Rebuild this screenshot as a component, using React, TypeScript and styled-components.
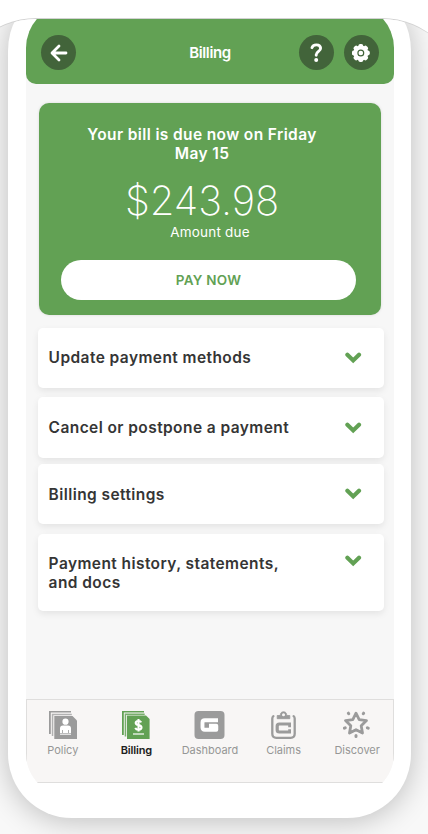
import React from 'react';
import styled, { createGlobalStyle } from 'styled-components';

const GREEN = '#62a154';

const Global = createGlobalStyle`
  *, *::before, *::after { box-sizing: border-box; }
  body { margin: 0; background: #fff; font-family: Inter, "Liberation Sans", sans-serif; }
  button { font: inherit; border: 0; padding: 0; cursor: pointer; }
  svg { display: block; }
`;

const Page = styled.main`
  width: 428px;
  height: 834px;
  padding-top: 18px;
  overflow: hidden;
  background: #fff;
`;

const Stage = styled.div`
  width: 506px;
  height: 816px;
  margin-left: -44px;
  padding-left: 52px;
  border-top: 1px solid #d2d2d2;
  border-radius: 80px 80px 0 0;
  background: #f8f8f8;
  overflow: hidden;
`;

const Phone = styled.div`
  width: 403px;
  height: 814px;
  margin-top: -15px;
  padding: 0 17px 0 18px;
  border-radius: 30px 30px 64px 64px / 47px 47px 64px 64px;
  background: #fff;
  box-shadow: 0 3px 30px rgba(0, 0, 0, 0.24);
`;

const Screen = styled.div`
  display: flex;
  flex-direction: column;
  width: 368px;
  height: 779px;
  clip-path: inset(0 0 -14px 0 round 44px);
  background: #f7f7f7;
`;

const Header = styled.header`
  display: grid;
  grid-template-columns: 1fr auto 1fr;
  align-items: center;
  height: 80px;
  flex: none;
  padding: 17px 15px 0;
  border-radius: 0 0 10px 10px;
  background: ${GREEN};
`;

const HeaderTitle = styled.h1`
  margin: 0;
  color: #fff;
  font-size: 15px;
  font-weight: 600;
  letter-spacing: -0.35px;
`;

const HeaderActions = styled.div`
  display: flex;
  justify-content: flex-end;
  gap: 10px;
`;

const RoundButton = styled.button`
  display: grid;
  place-items: center;
  width: 35px;
  height: 35px;
  border-radius: 50%;
  background: #42643a;
  color: #fff;
`;

const Content = styled.section`
  flex: 1;
  display: flex;
  flex-direction: column;
  padding: 19px 10px 0 12px;
`;

const BillCard = styled.article`
  display: flex;
  flex-direction: column;
  align-items: center;
  width: 342px;
  height: 212px;
  margin: 0 0 13px 1px;
  padding: 22px 22px 0;
  border-radius: 10px;
  background: ${GREEN};
  color: #fff;
  box-shadow: 0 0 3px rgba(0, 0, 0, 0.12);
`;

const BillTitle = styled.h2`
  width: 250px;
  margin: 0 0 0 -16px;
  text-align: center;
  font-size: 15.5px;
  font-weight: 600;
  line-height: 19px;
  letter-spacing: 0.38px;
`;

const Amount = styled.div`
  margin: 18px 0 0 -16px;
  font-size: 40px;
  font-weight: 200;
  line-height: 40px;
  letter-spacing: -0.05px;
`;

const AmountLabel = styled.div`
  margin: 2px 0 0;
  font-size: 13.5px;
  line-height: 18px;
  letter-spacing: 0.2px;
`;

const PayButton = styled.button`
  width: 295px;
  height: 40px;
  margin: 19px 3px 0 0;
  border-radius: 20px;
  background: #fff;
  color: ${GREEN};
  font-size: 13.5px;
  font-weight: 600;
  letter-spacing: 0.25px;
`;

const Row = styled.button<{ $height: number; $gap: number; $tall?: boolean }>`
  display: flex;
  justify-content: space-between;
  align-items: ${p => (p.$tall ? 'flex-start' : 'center')};
  width: 346px;
  height: ${p => p.$height}px;
  flex: none;
  margin-bottom: ${p => p.$gap}px;
  padding: ${p => (p.$tall ? '20px 22px 0 10.6px' : '0 22px 0 10.6px')};
  border-radius: 5px;
  background: #fff;
  color: #353535;
  text-align: left;
  box-shadow: 0 3px 7px rgba(0, 0, 0, 0.08);

  svg { margin-top: ${p => (p.$tall ? '1px' : '0')}; }
`;

const RowLabel = styled.span<{ $raised?: boolean }>`
  padding-bottom: ${p => (p.$raised ? '2px' : '0')};
  font-size: 15.5px;
  font-weight: 600;
  line-height: 19px;
  letter-spacing: 0.42px;
  white-space: pre-line;
`;

const TabBar = styled.nav`
  display: grid;
  grid-template-columns: repeat(5, 73.6px);
  height: 84px;
  flex: none;
  padding-top: 11px;
  border: 1px solid #dfdedd;
  background: #f8f6f5;
`;

const Tab = styled.button<{ $active?: boolean }>`
  display: flex;
  flex-direction: column;
  align-items: center;
  gap: 3px;
  height: 50px;
  margin-left: -2px;
  background: none;
  color: ${p => (p.$active ? '#202020' : '#969696')};
  font-size: 11px;
  font-weight: ${p => (p.$active ? 600 : 400)};
  line-height: 16px;
  letter-spacing: ${p => (p.$active ? '-0.15px' : '-0.02px')};
  white-space: nowrap;
`;

const BackIcon = () => (
  <svg width="18" height="18" viewBox="0 0 18 18" fill="none" stroke="#fff" strokeWidth="2.8" strokeLinecap="round" strokeLinejoin="round">
    <path d="M9 2 2 9l7 7M2.2 9H16" />
  </svg>
);

const HelpIcon = () => (
  <svg width="20" height="20" viewBox="0 0 20 20" fill="none" stroke="#fff" strokeWidth="2.9" strokeLinecap="round">
    <path d="M5 4.7C6 .9 13.3.8 13.6 5.2c.2 3.2-4.3 3.2-4.4 6.6v.4" />
    <circle cx="9.2" cy="17.1" r="2" fill="#fff" stroke="none" />
  </svg>
);

const GearIcon = () => (
  <svg width="20" height="18" viewBox="0 0 20 18">
    <g fill="#fff" transform="translate(-.2)">
      {[0, 45, 90, 135].map(a => (
        <rect key={a} x="6.6" y="0" width="4.8" height="18" rx="1.8" transform={`rotate(${a} 9 9)`} />
      ))}
      <circle cx="9" cy="9" r="7.5" />
    </g>
    <circle cx="8.8" cy="9" r="2.9" fill="none" stroke="#42643a" strokeWidth="1.2" />
  </svg>
);

const Chevron = () => (
  <svg width="17" height="12" viewBox="0 0 17 12" fill="none" stroke={GREEN} strokeWidth="4.2" strokeLinecap="round">
    <path d="m2.4 2.8 5.8 5.6L14 2.8" />
  </svg>
);

const PolicyIcon = () => (
  <svg width="28" height="28" viewBox="0 0 28 28" fill="#9b9b9b">
    <path d="M0 0h22v1.6H1.8V23H0z" />
    <path d="M2.8 2.8h20v1.4H4.3V25H2.8z" opacity=".75" />
    <path d="M5.3 5H23.5L28 9.5V28H5.3z" />
    <g fill="#fff">
      <circle cx="16.5" cy="10.7" r="3.1" />
      <path d="M11 22v-4.5a3 3 0 0 1 3-3h5a3 3 0 0 1 3 3V22h-2v-3h-.8v3h-5.4v-3H13v3z" />
      <path d="M11 22.5h11V24H11z" opacity=".7" />
    </g>
  </svg>
);

const BillingIcon = () => (
  <svg width="28" height="28" viewBox="0 0 28 28" fill={GREEN}>
    <path d="M0 0h22v1.6H1.8V24H0z" />
    <path d="M2.7 2.6h20V4H4.2v21.5H2.7z" opacity=".85" />
    <path d="M5 4.5h19l3.6 3.6V28H5z" />
    <path d="M19.2 11.4c-1-2.2-5.5-1.8-5.5.5 0 3 5.8 1.4 5.8 4.6 0 2.8-5.2 2.8-6.2.3M16.5 8v12.4" fill="none" stroke="#fff" strokeWidth="2.1" />
    <path d="M11 22h11v2H11z" fill="#fff" opacity=".6" />
  </svg>
);

const DashboardIcon = () => (
  <svg width="31" height="28" viewBox="0 0 31 28">
    <rect x=".5" width="30" height="28" rx="4" fill="#9b9b9b" />
    <path d="M24 9.3H10.8c-1.6 0-2.3.8-2.3 2.2v5c0 1.4.7 2.2 2.3 2.2h11.5v-4H15" fill="none" stroke="#fff" strokeWidth="3.9" strokeLinejoin="round" />
  </svg>
);

const ClaimsIcon = () => (
  <svg width="25" height="28" viewBox="0 0 25 28" fill="none" stroke="#9b9b9b">
    <path d="M2.4 5.2C1.6 5.8 1.3 6.6 1.3 7.6v15.2c0 2.7 1.3 4 4 4h14.4c2.7 0 4-1.3 4-4V7.6c0-1-.3-1.8-1.1-2.4" strokeWidth="2.3" strokeLinecap="round" />
    <path d="M6.2 4.5h3.2c-.8-5 7-5 6.2 0h3.2v3.2H6.2z" fill="#9b9b9b" strokeWidth=".8" />
    <circle cx="12.5" cy="3.8" r="1.5" fill="#f8f6f5" stroke="none" />
    <path d="M20 13H8.3c-1.5 0-2.1.7-2.1 2v4c0 1.3.6 2 2.1 2H20" strokeWidth="3.2" />
    <path d="M18.6 13v3.2M18.6 21v-2.8" strokeWidth="2.8" />
  </svg>
);

const DiscoverIcon = () => (
  <svg width="28" height="28" viewBox="0 0 28 28" fill="none" stroke="#9b9b9b" strokeLinecap="round" strokeLinejoin="round">
    <g transform="translate(-1)">
      <path d="m14 2.2 3.2 6.5 7.3.9-5.3 5.2 1.3 7.2-6.5-3.3L7.5 22l1.3-7.2-5.3-5.2 7.3-.9z" strokeWidth="2.8" />
      <path d="m6.4 2.2.3.5M21.6 2.2l-.3.5M2.4 17.2l.8-.3M26.2 17.2l-.8-.3M14 24.4v1.2" strokeWidth="3" />
    </g>
  </svg>
);

const rows = [
  { label: 'Update payment methods', height: 60, gap: 9, raised: true },
  { label: 'Cancel or postpone a payment', height: 61, gap: 6 },
  { label: 'Billing settings', height: 60, gap: 10 },
  { label: 'Payment history, statements,\nand docs', height: 77, gap: 0, tall: true },
];

const tabs = [
  { label: 'Policy', Icon: PolicyIcon },
  { label: 'Billing', Icon: BillingIcon, active: true },
  { label: 'Dashboard', Icon: DashboardIcon },
  { label: 'Claims', Icon: ClaimsIcon },
  { label: 'Discover', Icon: DiscoverIcon },
];

export default function App() {
  return (
    <>
      <Global />
      <Page>
        <Stage>
          <Phone>
            <Screen>
              <Header>
                <RoundButton aria-label="Back"><BackIcon /></RoundButton>
                <HeaderTitle>Billing</HeaderTitle>
                <HeaderActions>
                  <RoundButton aria-label="Help"><HelpIcon /></RoundButton>
                  <RoundButton aria-label="Settings"><GearIcon /></RoundButton>
                </HeaderActions>
              </Header>
              <Content>
                <BillCard>
                  <BillTitle>Your bill is due now on Friday May 15</BillTitle>
                  <Amount>$243.98</Amount>
                  <AmountLabel>Amount due</AmountLabel>
                  <PayButton>PAY NOW</PayButton>
                </BillCard>
                {rows.map(r => (
                  <Row key={r.label} $height={r.height} $gap={r.gap} $tall={r.tall}>
                    <RowLabel $raised={r.raised}>{r.label}</RowLabel>
                    <Chevron />
                  </Row>
                ))}
              </Content>
              <TabBar>
                {tabs.map(({ label, Icon, active }) => (
                  <Tab key={label} $active={active}>
                    <Icon />
                    {label}
                  </Tab>
                ))}
              </TabBar>
            </Screen>
          </Phone>
        </Stage>
      </Page>
    </>
  );
}
